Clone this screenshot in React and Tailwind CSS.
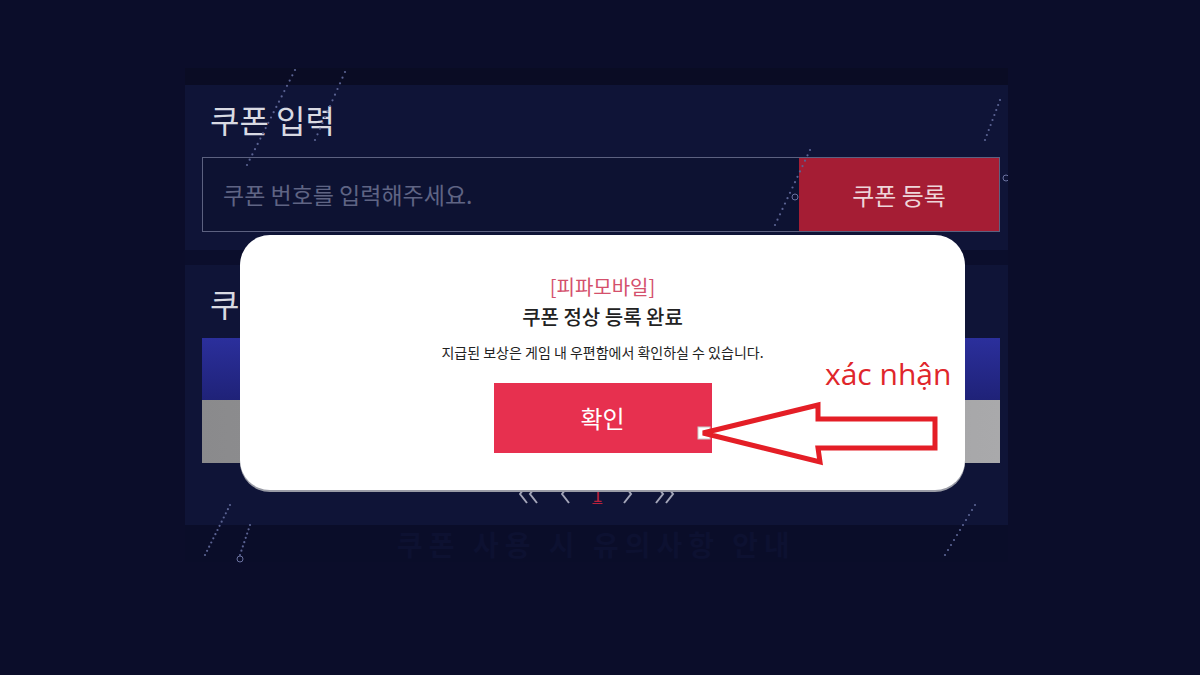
import React from "react";

const kr = { fontFamily: '"Noto Sans CJK KR", "Noto Sans", sans-serif' };

// dotted diagonal line decoration
const Dots = ({ x1, y1, x2, y2, n = 18 }) => {
  const pts = [];
  for (let i = 0; i <= n; i++) {
    pts.push([x1 + ((x2 - x1) * i) / n, y1 + ((y2 - y1) * i) / n]);
  }
  return pts.map(([x, y], i) => <circle key={i} cx={x} cy={y} r="1.1" fill="#5b6393" />);
};

const Chevron = ({ dir = "left", double = false }) => {
  const single = (ox) =>
    dir === "left"
      ? `M${ox + 7} 0 L${ox} 9 L${ox + 7} 18`
      : `M${ox} 0 L${ox + 7} 9 L${ox} 18`;
  return (
    <svg width={double ? 22 : 12} height="20" viewBox={`-1 -1 ${double ? 22 : 12} 20`}>
      <path d={single(0)} stroke="#a3a5b8" strokeWidth="2" fill="none" />
      {double && <path d={single(10)} stroke="#a3a5b8" strokeWidth="2" fill="none" />}
    </svg>
  );
};

const App = () => {
  return (
    <div className="w-[1200px] h-[675px] bg-[#0b0d2a] overflow-hidden" style={kr}>
      <div className="relative ml-[185px] pt-[68px] w-[823px]">
        {/* top strip */}
        <div className="h-[17px] bg-[#0a0c24]" />

        {/* coupon input panel */}
        <div className="h-[165px] bg-[#0f1437] pt-[14px]">
          <h2 className="pl-[25px] text-[32px] leading-[40px] text-[#d9dae2]">쿠폰 입력</h2>
          <div className="mt-[18px] ml-[17px] w-[798px] h-[75px] flex border border-[#5c6180] bg-[#0d1232]">
            <div className="flex-1 flex items-center pl-[20px] text-[23px] text-[#5f6484]">
              쿠폰 번호를 입력해주세요.
            </div>
            <button className="w-[200px] h-full bg-[#a51d34] text-[24px] text-[#eed6da]">
              쿠폰 등록
            </button>
          </div>
        </div>

        <div className="h-[15px] bg-[#0b0e2c]" />

        {/* history panel */}
        <div className="h-[260px] bg-[#0f1437] pt-[18px]">
          <h2 className="pl-[25px] text-[32px] leading-[40px] text-[#d9dae2]">쿠폰 등록 내역</h2>
          <div className="mt-[15px] ml-[17px] w-[798px]">
            <div className="h-[62px] bg-gradient-to-b from-[#2b2f9c] to-[#1f2278]" />
            <div className="h-[63px] bg-gradient-to-r from-[#8a8a8c] to-[#a9a9ab]" />
          </div>
          <div className="mt-[21px] flex items-center justify-center gap-[20px] pl-[2px]">
            <Chevron dir="left" double />
            <Chevron dir="left" />
            <span className="text-[18px] leading-[20px] text-[#b8213c] underline">1</span>
            <Chevron dir="right" />
            <Chevron dir="right" double />
          </div>
        </div>

        {/* faint footer */}
        <div className="h-[37px] bg-[#0a0d29] flex items-center justify-center">
          <span className="text-[28px] font-bold tracking-[6px] text-[#0d1131]">
            쿠폰 사용 시 유의사항 안내
          </span>
        </div>

        {/* decorative dots */}
        <svg className="absolute left-0 top-0 pointer-events-none" width="823" height="260">
          <Dots x1={110} y1={70} x2={62} y2={165} />
          <Dots x1={160} y1={72} x2={130} y2={140} n={12} />
          <Dots x1={625} y1={150} x2={590} y2={225} n={14} />
          <Dots x1={815} y1={100} x2={800} y2={140} n={8} />
          <circle cx="610" cy="197" r="3" stroke="#6b72a0" strokeWidth="1" fill="none" />
          <circle cx="821" cy="178" r="3" stroke="#6b72a0" strokeWidth="1" fill="none" />
        </svg>
        <svg className="absolute left-0 top-[480px] pointer-events-none" width="823" height="90">
          <Dots x1={45} y1={25} x2={20} y2={75} n={12} />
          <Dots x1={65} y1={45} x2={55} y2={75} n={7} />
          <Dots x1={790} y1={25} x2={760} y2={75} n={10} />
          <circle cx="55" cy="79" r="3" stroke="#6b72a0" fill="none" />
        </svg>

        {/* modal */}
        <div className="absolute left-[55px] top-[235px] w-[725px] h-[255px] bg-white rounded-[30px] shadow-[0_2px_0_#9a9ca6] flex flex-col items-center pt-[40px]">
          <p className="text-[20px] leading-[24px] text-[#d4506c]">[피파모바일]</p>
          <p className="mt-[5px] text-[20px] leading-[26px] font-medium text-[#222]">쿠폰 정상 등록 완료</p>
          <p className="mt-[12px] text-[14px] leading-[20px] text-[#222]">
            지급된 보상은 게임 내 우편함에서 확인하실 수 있습니다.
          </p>
          <button className="mt-[21px] w-[218px] h-[70px] bg-[#e7304f] text-white text-[24px]">
            확인
          </button>

          {/* annotation */}
          <span
            className="absolute left-[585px] top-[120px] text-[30px] leading-[38px] text-[#e0262b]"
            style={{ fontFamily: '"Open Sans", sans-serif' }}
          >
            xác nhận
          </span>
          <svg className="absolute left-[455px] top-[165px]" width="250" height="70" viewBox="0 0 250 70">
            <rect x="3" y="27" width="12" height="12" fill="#fff" stroke="#c9c9c9" />
            <polygon
              points="8,33 123,5 123,19 240,19 240,48 123,48 125,62"
              fill="#fff"
              stroke="#e41e26"
              strokeWidth="5"
              strokeLinejoin="miter"
            />
          </svg>
        </div>
      </div>
    </div>
  );
};

export default App;
